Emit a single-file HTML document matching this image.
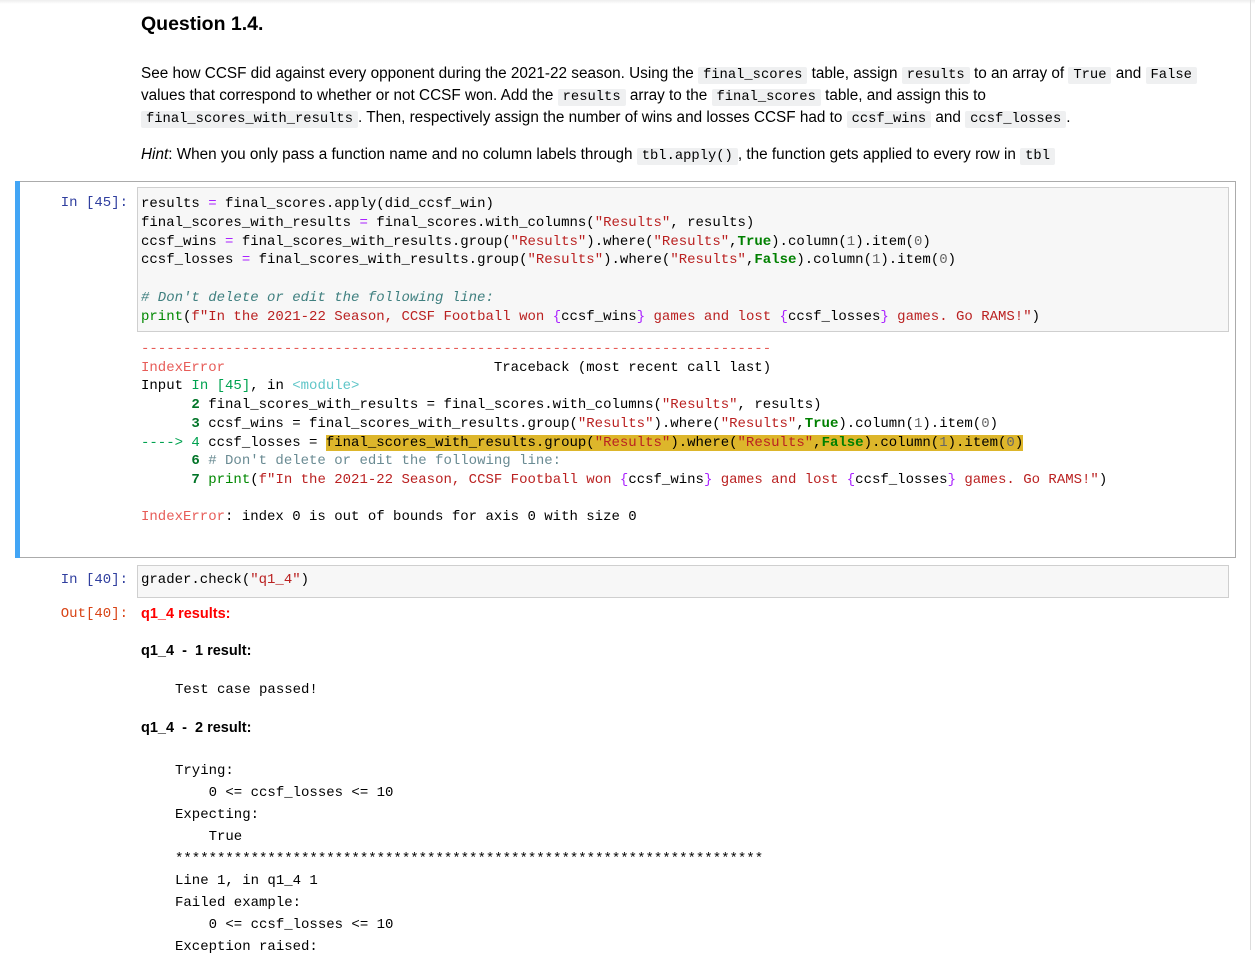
<!DOCTYPE html>
<html><head><meta charset="utf-8"><style>
body{margin:0;width:1255px;height:950px;overflow:hidden;background:#fff;position:relative;font-family:"Liberation Sans",Arial,sans-serif;color:#000}
.a{position:absolute;white-space:pre}
.m{font-family:"Liberation Mono",monospace;font-size:14px}
.p{font-size:15.3px;line-height:22px}
code{font-family:"Liberation Mono",monospace;font-size:13.8px;background:#eff0f1;padding:1px 5px;border-radius:2px}
.kw{color:#008000;font-weight:bold}.op{color:#aa22ff}.s{color:#ba2121}.n{color:#080}.c{color:#408080;font-style:italic}.nm{color:#666}
.pr{color:#303f9f;text-align:right;width:123px;left:5px}
.tr{color:#e75c58}.gn{color:#00a250}.cy{color:#60c6c8}.bn{color:#007427;font-weight:bold}.gm{color:#6a8b93}
.b{font-size:14.5px;font-weight:bold}
</style></head><body>
<div class="a" style="left:0;top:0;width:1255px;height:4px;background:linear-gradient(#eee,#fff)"></div>
<div class="a" style="left:1250px;top:0;width:1px;height:950px;background:#ddd"></div>
<div class="a" style="left:141px;top:13px;font-size:19.5px;font-weight:bold">Question 1.4.</div>
<div class="a p" style="left:141px;top:63px">See how CCSF did against every opponent during the 2021-22 season. Using the <code>final_scores</code> table, assign <code>results</code> to an array of <code>True</code> and <code>False</code></div>
<div class="a p" style="left:141px;top:85px">values that correspond to whether or not CCSF won. Add the <code>results</code> array to the <code>final_scores</code> table, and assign this to</div>
<div class="a p" style="left:141px;top:107px"><code>final_scores_with_results</code>. Then, respectively assign the number of wins and losses CCSF had to <code>ccsf_wins</code> and <code>ccsf_losses</code>.</div>
<div class="a p" style="left:141px;top:144px"><i>Hint</i>: When you only pass a function name and no column labels through <code>tbl.apply()</code>, the function gets applied to every row in <code>tbl</code></div>

<div class="a" style="left:15px;top:181px;width:1220px;height:375px;border:1px solid #ababab;border-left:0"></div>
<div class="a" style="left:15px;top:181px;width:5px;height:377px;background:#42a5f5"></div>
<div class="a" style="left:137px;top:187px;width:1090px;height:143px;background:#f7f7f7;border:1px solid #cfcfcf"></div>
<div class="a m pr" style="top:195px">In [45]:</div>
<div class="a m" style="left:141px;top:195px;line-height:18.8px">results <span class="op">=</span> final_scores.apply(did_ccsf_win)
final_scores_with_results <span class="op">=</span> final_scores.with_columns(<span class="s">"Results"</span>, results)
ccsf_wins <span class="op">=</span> final_scores_with_results.group(<span class="s">"Results"</span>).where(<span class="s">"Results"</span>,<span class="kw">True</span>).column(<span class="nm">1</span>).item(<span class="nm">0</span>)
ccsf_losses <span class="op">=</span> final_scores_with_results.group(<span class="s">"Results"</span>).where(<span class="s">"Results"</span>,<span class="kw">False</span>).column(<span class="nm">1</span>).item(<span class="nm">0</span>)

<span class="c"># Don't delete or edit the following line:</span>
<span class="n">print</span>(<span class="s">f"In the 2021-22 Season, CCSF Football won </span><span class="op">{</span>ccsf_wins<span class="op">}</span><span class="s"> games and lost </span><span class="op">{</span>ccsf_losses<span class="op">}</span><span class="s"> games. Go RAMS!"</span>)</div>

<div class="a m" style="left:141px;top:340px;line-height:18.7px"><span class="tr">---------------------------------------------------------------------------</span>
<span class="tr">IndexError</span>                                Traceback (most recent call last)
Input <span class="gn">In [45]</span>, in <span class="cy">&lt;module&gt;</span>
<span class="bn">      2</span> final_scores_with_results = final_scores.with_columns(<span class="s">"Results"</span>, results)
<span class="bn">      3</span> ccsf_wins = final_scores_with_results.group(<span class="s">"Results"</span>).where(<span class="s">"Results"</span>,<span class="kw">True</span>).column(<span class="nm">1</span>).item(<span class="nm">0</span>)
<span class="gn">----&gt; 4</span> ccsf_losses = <span style="background:#ddb62b">final_scores_with_results.group(<span class="s">"Results"</span>).where(<span class="s">"Results"</span>,<span class="kw">False</span>).column(<span class="nm">1</span>).item(<span class="nm">0</span>)</span>
<span class="bn">      6</span> <span class="gm"># Don't delete or edit the following line:</span>
<span class="bn">      7</span> <span class="n">print</span>(<span class="s">f"In the 2021-22 Season, CCSF Football won </span><span class="op">{</span>ccsf_wins<span class="op">}</span><span class="s"> games and lost </span><span class="op">{</span>ccsf_losses<span class="op">}</span><span class="s"> games. Go RAMS!"</span>)

<span class="tr">IndexError</span>: index 0 is out of bounds for axis 0 with size 0</div>

<div class="a" style="left:137px;top:565px;width:1090px;height:31px;background:#f7f7f7;border:1px solid #cfcfcf"></div>
<div class="a m pr" style="top:572px">In [40]:</div>
<div class="a m" style="left:141px;top:572px">grader.check(<span class="s">"q1_4"</span>)</div>
<div class="a m pr" style="top:606px;color:#d84315">Out[40]:</div>
<div class="a b" style="left:141px;top:606px;color:#f00">q1_4 results:</div>
<div class="a b" style="left:141px;top:643px">q1_4  -  1 result:</div>
<div class="a m" style="left:175px;top:682px">Test case passed!</div>
<div class="a b" style="left:141px;top:720px">q1_4  -  2 result:</div>
<div class="a m" style="left:175px;top:760px;line-height:22px">Trying:
    0 &lt;= ccsf_losses &lt;= 10
Expecting:
    True
**********************************************************************
Line 1, in q1_4 1
Failed example:
    0 &lt;= ccsf_losses &lt;= 10
Exception raised:</div>
</body></html>
